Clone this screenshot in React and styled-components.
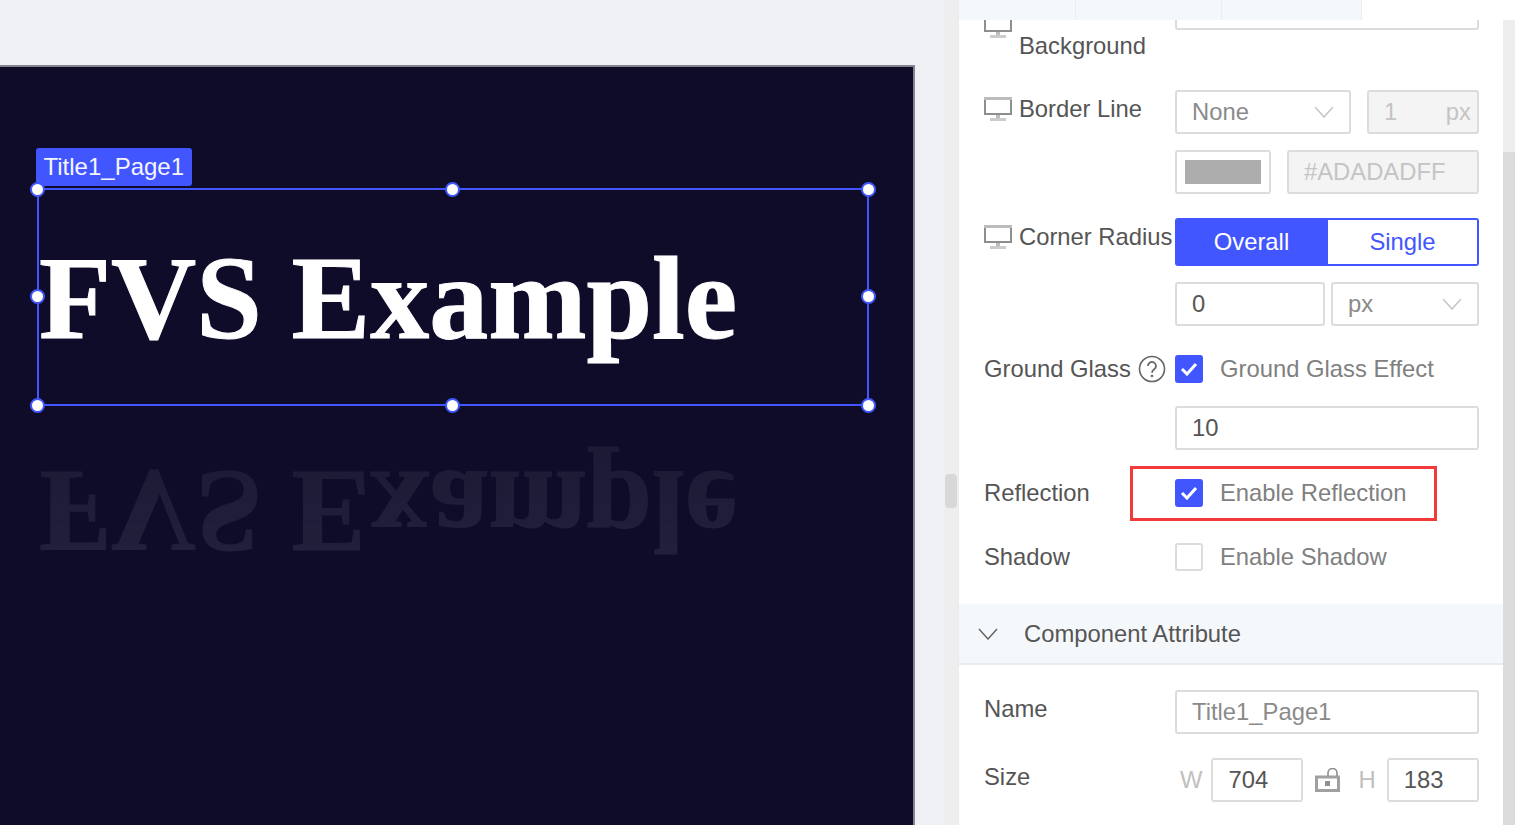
import React from 'react'
import styled, { createGlobalStyle } from 'styled-components'

const GlobalStyle = createGlobalStyle`
    html, body {
        margin: 0;
        padding: 0;
        height: 100%;
        overflow: hidden;
        font-family: "Liberation Sans", Arial, sans-serif;
    }
`
const Page = styled.div`
    display: flex;
    width: 1516px;
    height: 825px;
    overflow: hidden;
    background: #eff0f4;
`
// ***************************************************
// canvas side
const Workspace = styled.div`
    width: 945px;
    padding-top: 65px;
    box-sizing: border-box;
    flex-shrink: 0;
`
const Canvas = styled.div`
    position: relative;
    width: 915px;
    height: 760px;
    box-sizing: border-box;
    background: #0f0c2a;
    border-top: 2px solid #85838f;
    border-right: 2px solid #85838f;
`
const Selection = styled.div`
    position: absolute;
    left: 37px;
    top: 121px;
    width: 832px;
    height: 218px;
    box-sizing: border-box;
    border: 2px solid #4256ff;
`
const SelectionLabel = styled.div`
    position: absolute;
    left: -3px;
    top: -42px;
    height: 38px;
    padding: 0 7.5px;
    display: flex;
    align-items: center;
    background: #4256ff;
    border-radius: 3px;
    color: #f4f5ff;
    font-size: 24px;
    white-space: nowrap;
`
const Handle = styled.span`
    position: absolute;
    left: ${({ $x }) => $x};
    top: ${({ $y }) => $y};
    width: 15px;
    height: 15px;
    margin: -7.5px 0 0 -7.5px;
    box-sizing: border-box;
    background: #fff;
    border: 2px solid #4256ff;
    border-radius: 50%;
`
const TitleText = styled.div`
    position: absolute;
    left: 0;
    top: 0;
    width: 100%;
    height: 214px;
    box-sizing: border-box;
    padding-top: 7px;
    color: #fff;
    font-family: "Liberation Serif", "Times New Roman", serif;
    font-weight: bold;
    font-size: 118px;
    line-height: 203px;
    white-space: nowrap;
    -webkit-text-stroke: 1px #fff;
    -webkit-box-reflect: below 2px linear-gradient(to bottom, rgba(255,255,255,0.09), rgba(255,255,255,0.05));
`
// ***************************************************
// gutter between canvas and panel
const Gutter = styled.div`
    width: 13px;
    flex-shrink: 0;
    background: #eeeeee;
    display: flex;
    align-items: flex-start;
    padding-top: 474px;
    box-sizing: border-box;
`
const GutterGrip = styled.div`
    width: 12px;
    height: 34px;
    background: #d8d8d8;
    border-radius: 4px;
`
// ***************************************************
// right panel
const Panel = styled.div`
    width: 558px;
    height: 825px;
    box-sizing: border-box;
    background: #fff;
    border-left: 1px solid #e6ecf5;
    display: flex;
    flex-direction: column;
    flex-shrink: 0;
`
const Tabs = styled.div`
    display: flex;
    height: 20px;
    flex-shrink: 0;
`
const Tab = styled.div`
    width: ${({ $w }) => $w}px;
    background: #f4f8fb;
    border-right: 1px solid #e8eef3;
    box-sizing: border-box;
`
const PanelMain = styled.div`
    flex: 1;
    display: flex;
    min-height: 0;
`
const FormScroll = styled.div`
    width: 544px;
    overflow: hidden;
`
const Scrollbar = styled.div`
    width: 12px;
    padding-top: 132px;
    box-sizing: border-box;
    background: #eeeeee;
`
const ScrollThumb = styled.div`
    height: 100%;
    background: #dcdcdc;
`
const FormBody = styled.div`
    margin-top: -34px;
`
const Row = styled.div`
    display: grid;
    grid-template-columns: 191px 304px;
    padding-left: 25px;
    margin-bottom: ${({ $mb }) => $mb ?? 16}px;
    align-items: start;
`
const Label = styled.div`
    display: flex;
    align-items: center;
    gap: ${({ $gap }) => $gap ?? 6}px;
    font-size: 23.8px;
    line-height: 28px;
    color: #555;
    white-space: nowrap;
    margin-top: ${({ $mt }) => $mt ?? 0}px;
`
const WrappedLabel = styled(Label)`
    align-items: flex-start;
`
const WrappedText = styled.span`
    margin-top: 18px;
`
const Controls = styled.div`
    display: flex;
    gap: ${({ $gap }) => $gap ?? 16}px;
    align-items: center;
    min-width: 0;
`
const Field = styled.div`
    height: 44px;
    width: ${({ $w }) => ($w ? `${$w}px` : 'auto')};
    flex: ${({ $w }) => ($w ? 'none' : 1)};
    box-sizing: border-box;
    display: flex;
    align-items: center;
    justify-content: space-between;
    padding: 0 ${({ $right }) => $right ?? 15}px 0 15px;
    border: 2px solid #dcdcdc;
    border-radius: 3px;
    background: ${({ $disabled }) => ($disabled ? '#f4f4f4' : '#fff')};
    color: ${({ $disabled, $muted }) => ($disabled ? '#c4c4c4' : $muted ? '#8a8a8a' : '#555')};
    font-size: 23.8px;
    white-space: nowrap;
`
const Swatch = styled.div`
    width: 96px;
    height: 44px;
    padding: 8px;
    box-sizing: border-box;
    border: 2px solid #dcdcdc;
    border-radius: 3px;
    flex-shrink: 0;
`
const SwatchColor = styled.div`
    width: 100%;
    height: 100%;
    background: #adadad;
`
const Segmented = styled.div`
    display: flex;
    width: 304px;
    height: 48px;
`
const Segment = styled.div`
    flex: ${({ $active }) => ($active ? '0 0 153px' : 1)};
    display: flex;
    align-items: center;
    justify-content: center;
    box-sizing: border-box;
    font-size: 23.8px;
    border: 2px solid #4256ff;
    border-left: ${({ $active }) => ($active ? '2px solid #4256ff' : 'none')};
    border-radius: ${({ $active }) => ($active ? '3px 0 0 3px' : '0 3px 3px 0')};
    background: ${({ $active }) => ($active ? '#4256ff' : '#fff')};
    color: ${({ $active }) => ($active ? '#fff' : '#4256ff')};
`
const CheckRow = styled.div`
    display: flex;
    align-items: center;
    gap: 17px;
    height: 28px;
    font-size: 23.8px;
    color: #808080;
    white-space: nowrap;
`
const CheckBox = styled.span`
    width: 28px;
    height: 28px;
    box-sizing: border-box;
    border-radius: 3px;
    display: flex;
    align-items: center;
    justify-content: center;
    background: ${({ $on }) => ($on ? '#4256ff' : '#fff')};
    border: ${({ $on }) => ($on ? 'none' : '2px solid #dcdcdc')};
`
const Highlight = styled.div`
    position: absolute;
    left: -45px;
    top: -13px;
    width: 307px;
    height: 55px;
    box-sizing: border-box;
    border: 3px solid #f33a3a;
    pointer-events: none;
`
const RelativeCell = styled.div`
    position: relative;
`
const SectionHeader = styled.div`
    display: flex;
    align-items: center;
    height: 61px;
    box-sizing: border-box;
    margin-bottom: 25px;
    padding-left: 19px;
    gap: 26px;
    background: #f5f8fb;
    border-bottom: 2px solid #e8ecf1;
    font-size: 23.8px;
    color: #555;
`
const SizeRow = styled.div`
    display: flex;
    align-items: center;
`
const SizeLetter = styled.span`
    font-size: 23.8px;
    color: #c0c0c0;
    margin: ${({ $m }) => $m};
`
const LockBox = styled.span`
    display: flex;
    margin: 0 18px 0 12px;
`

const MonitorIcon = () => (
    <svg width="28" height="24" viewBox="0 0 28 24" fill="none" style={{ flexShrink: 0 }}>
        <path d="M0 0h28v3H0z" fill="#bcbcbc" />
        <path d="M1 3v14h26V3" stroke="#8e8e8e" strokeWidth="2" />
        <path d="M12 18h4v3h-4z" fill="#bcbcbc" />
        <path d="M6 21h16v3H6z" fill="#cccccc" />
    </svg>
)
const Chevron = ({ size = 20, color = '#c4c4c4' }) => (
    <svg width={size} height={size * 0.6} viewBox="0 0 20 12" fill="none">
        <path d="M1 1l9 10 9-10" stroke={color} strokeWidth="1.5" />
    </svg>
)
const Check = () => (
    <svg width="18" height="14" viewBox="0 0 18 14" fill="none">
        <path d="M2 7l5 5 9-10" stroke="#fff" strokeWidth="3" />
    </svg>
)
const HelpIcon = () => (
    <svg width="28" height="28" viewBox="0 0 28 28" fill="none" style={{ marginLeft: 1 }}>
        <circle cx="14" cy="14" r="12.5" stroke="#666" strokeWidth="1.6" />
        <path d="M10 11a4 4 0 1 1 6.2 3.3c-1.4.9-2.2 1.6-2.2 3.4" stroke="#666" strokeWidth="1.8" />
        <circle cx="14" cy="21" r="1.3" fill="#666" />
    </svg>
)
const LockIcon = () => (
    <svg width="25" height="24" viewBox="0 0 25 24" fill="none">
        <path d="M1.5 9h22v13.500h-22z" stroke="#a0a0a0" strokeWidth="3" />
        <path d="M13 8V5a4.500 4.500 0 0 1 9 0v3" stroke="#8c8c8c" strokeWidth="1.600" />
        <rect x="10" y="13" width="5" height="5" fill="#909090" />
    </svg>
)

const handles = [
    ['-2px', 'calc(0% - 1px)'], ['calc(50% - 1px)', 'calc(0% - 1px)'], ['calc(100% + 1px)', 'calc(0% - 1px)'],
    ['-2px', 'calc(50% - 1px)'], ['calc(100% + 1px)', 'calc(50% - 1px)'],
    ['-2px', 'calc(100% + 1px)'], ['calc(50% - 1px)', 'calc(100% + 1px)'], ['calc(100% + 1px)', 'calc(100% + 1px)'],
]

const App = () => {
    return (
        <Page>
            <GlobalStyle />
            <Workspace>
                <Canvas>
                    <Selection>
                        <TitleText>FVS Example</TitleText>
                        <SelectionLabel>Title1_Page1</SelectionLabel>
                        {handles.map(([x, y]) => <Handle key={x + y} $x={x} $y={y} />)}
                    </Selection>
                </Canvas>
            </Workspace>

            <Gutter><GutterGrip /></Gutter>

            <Panel>
                <Tabs>
                    <Tab $w={117} />
                    <Tab $w={146} />
                    <Tab $w={140} />
                </Tabs>
                <PanelMain>
                    <FormScroll>
                        <FormBody>
                            <Row $mb={30}>
                                <WrappedLabel $mt={28} $gap={7}>
                                    <MonitorIcon />
                                    <WrappedText>Background</WrappedText>
                                </WrappedLabel>
                                <Field />
                            </Row>

                            <Row $mb={16}>
                                <Label $mt={5} $gap={7}><MonitorIcon />Border Line</Label>
                                <Controls>
                                    <Field $w={176} $muted>None<Chevron /></Field>
                                    <Field $disabled $right={6}>1<span>px</span></Field>
                                </Controls>
                            </Row>
                            <Row $mb={24}>
                                <span />
                                <Controls>
                                    <Swatch><SwatchColor /></Swatch>
                                    <Field $disabled>#ADADADFF</Field>
                                </Controls>
                            </Row>

                            <Row $mb={16}>
                                <Label $mt={5} $gap={7}><MonitorIcon />Corner Radius</Label>
                                <Segmented>
                                    <Segment $active>Overall</Segment>
                                    <Segment>Single</Segment>
                                </Segmented>
                            </Row>
                            <Row $mb={29}>
                                <span />
                                <Controls $gap={6}>
                                    <Field $w={150}>0</Field>
                                    <Field $muted>px<Chevron /></Field>
                                </Controls>
                            </Row>

                            <Row $mb={23}>
                                <Label>Ground Glass<HelpIcon /></Label>
                                <CheckRow><CheckBox $on><Check /></CheckBox>Ground Glass Effect</CheckRow>
                            </Row>
                            <Row $mb={29}>
                                <span />
                                <Field>10</Field>
                            </Row>

                            <Row $mb={36}>
                                <Label>Reflection</Label>
                                <RelativeCell>
                                    <CheckRow><CheckBox $on><Check /></CheckBox>Enable Reflection</CheckRow>
                                    <Highlight />
                                </RelativeCell>
                            </Row>
                            <Row $mb={33}>
                                <Label>Shadow</Label>
                                <CheckRow><CheckBox />Enable Shadow</CheckRow>
                            </Row>

                            <SectionHeader>
                                <Chevron color="#666" />
                                Component Attribute
                            </SectionHeader>

                            <Row $mb={24}>
                                <Label $mt={5}>Name</Label>
                                <Field $muted>Title1_Page1</Field>
                            </Row>
                            <Row>
                                <Label $mt={5}>Size</Label>
                                <SizeRow>
                                    <SizeLetter $m="0 9px 0 5px">W</SizeLetter>
                                    <Field $w={92}>704</Field>
                                    <LockBox><LockIcon /></LockBox>
                                    <SizeLetter $m="0 11px 0 0">H</SizeLetter>
                                    <Field $w={92}>183</Field>
                                </SizeRow>
                            </Row>
                        </FormBody>
                    </FormScroll>
                    <Scrollbar><ScrollThumb /></Scrollbar>
                </PanelMain>
            </Panel>
        </Page>
    )
}

export default App
